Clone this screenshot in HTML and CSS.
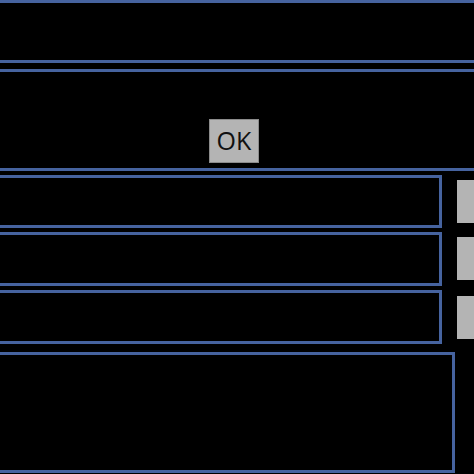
FILE: index.html
```html
<!DOCTYPE html>
<html lang="en">
<head>
    <meta charset="UTF-8">
    <meta name="viewport" content="width=device-width, initial-scale=1.0">
    <title>Form</title>
    <link rel="stylesheet" href="styles.css">
</head>
<body>

    <section class="form">
        <div class="box title"></div>

        <div class="box panel">
            <div class="btn ok">OK</div>
        </div>

        <div class="row first">
            <div class="box field"></div>
            <div class="btn side"></div>
        </div>
        <div class="row second">
            <div class="box field"></div>
            <div class="btn side"></div>
        </div>
        <div class="row third">
            <div class="box field"></div>
            <div class="btn side"></div>
        </div>

        <div class="box output"></div>
    </section>

</body>
</html>
```

FILE: styles.css
```css
body{
    margin: 0;
    background-color: #000;
    overflow: hidden;
    font-family: "Open Sans", "Noto Sans", sans-serif;
}

.form{
    width: 474px;
    height: 474px;
    display: flex;
    flex-direction: column;
}

.box{
    border: 3px solid #46639f;
    border-left: none;
    box-sizing: border-box;
    background-color: #000;
}

.title{
    height: 63px;
    border-right: none;
}

.panel{
    height: 102px;
    margin-top: 6px;
    border-right: none;
    display: flex;
    justify-content: center;
    align-items: flex-end;
    padding-bottom: 5px;
}

.btn{
    background-color: #b4b4b4;
    box-sizing: border-box;
    border: 1px solid #8c8c8c;
}

.ok{
    width: 50px;
    height: 44px;
    margin-right: 6px;
    display: flex;
    align-items: center;
    justify-content: center;
    font-size: 25px;
    color: #111;
    padding-bottom: 2px;
}

.row{
    display: flex;
    align-items: flex-start;
    gap: 15px;
    margin-top: 4px;
}

.field{
    width: 442px;
    height: 54px;
    flex-shrink: 0;
}

.first .field{ height: 53px; }

.side{
    flex: 1;
    height: 43px;
    margin-top: 5px;
    border: none;
}

.third .side{ margin-top: 6px; }

.output{
    width: 455px;
    height: 121px;
    margin-top: 8px;
}
```
